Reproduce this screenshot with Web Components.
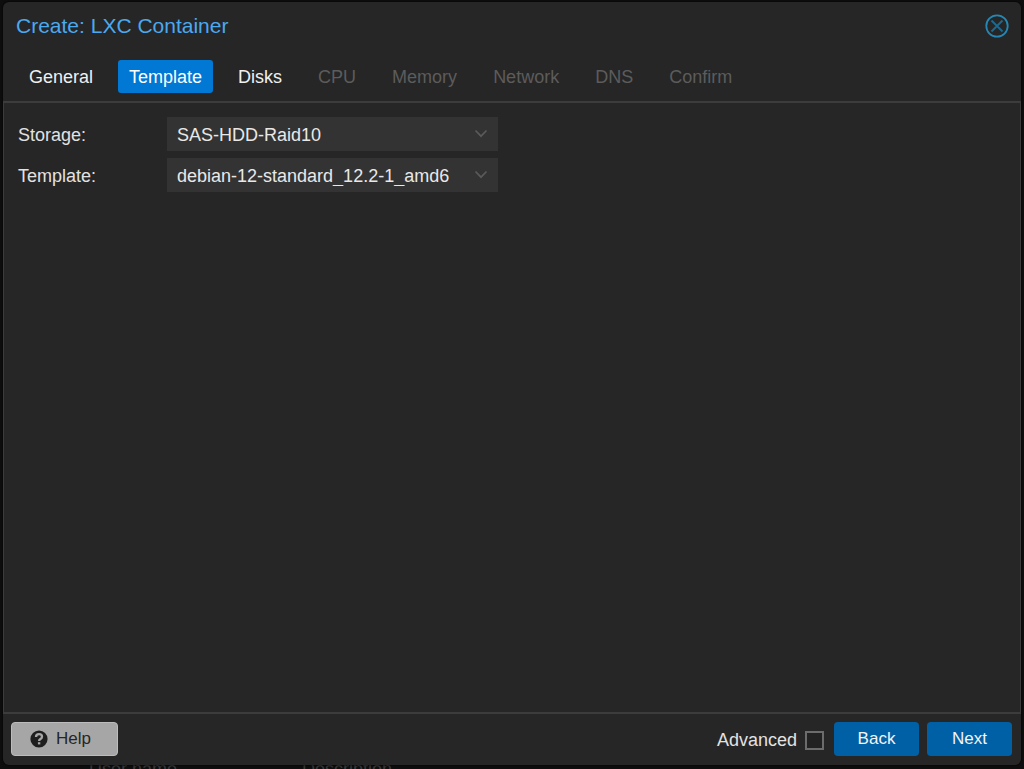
<!DOCTYPE html>
<html lang="en">
<head>
<meta charset="utf-8">
<title>Create: LXC Container</title>
<style>
  html, body { height: 100%; }
  body { margin: 0; background: #0e0e0e; overflow: hidden; font-family: "Liberation Sans", Arial, sans-serif; font-size: 18px; line-height: 20px; color: #e2e2e2; }
</style>
</head>
<body>
<wizard-app></wizard-app>
<script>
class Base extends HTMLElement {
  connectedCallback() {
    if (this.shadowRoot) return;
    this.attachShadow({ mode: 'open' }).innerHTML = '<style>*{box-sizing:border-box}</style>' + this.view();
  }
}

customElements.define('wizard-tab', class extends Base {
  view() {
    return `<style>
      :host { display: block; }
      button { display: block; height: 33px; padding: 0 11px; border: 0; border-radius: 3px; background: none; font: inherit; color: #f0f0f0; }
      button:disabled { color: #5c5c5c; }
      :host([active]) button { background: #0078d4; color: #fff; }
    </style><button role="tab" aria-selected="${this.hasAttribute('active')}" ${this.hasAttribute('disabled') ? 'disabled' : ''}><slot></slot></button>`;
  }
});

customElements.define('wizard-select', class extends Base {
  view() {
    return `<style>
      :host { display: grid; grid-template-columns: 149px 331px; align-items: center; }
      label { padding-top: 2px; }
      .box { display: grid; grid-template-columns: 1fr 34px; align-items: center; height: 34px; background: #333; }
      select { grid-area: 1 / 1 / 2 / 3; width: 100%; height: 34px; padding: 2px 34px 0 10px; border: 0; border-radius: 0; appearance: none; background: none; font: inherit; color: #e8e8e8; }
      svg { grid-area: 1 / 2; width: 14px; height: 10px; justify-self: center; pointer-events: none; }
    </style>
    <label for="s">${this.getAttribute('label')}:</label>
    <div class="box"><select id="s"><option>${this.getAttribute('value')}</option></select>
    <svg viewBox="0 0 14 10"><path d="M1.5 1.5 7 7.2l5.500-5.700" fill="none" stroke="#5a5a5a" stroke-width="1.700"/></svg></div>`;
  }
});

customElements.define('wizard-button', class extends Base {
  view() {
    return `<style>
      :host { display: block; font-size: 17px; }
      button { display: flex; align-items: center; justify-content: center; gap: 8px; min-width: 85px; height: 34px; padding: 0 18px; border: 0; border-radius: 4px; background: #0060a6; color: #f4f4f4; font: inherit; }
      :host([plain]) button { justify-content: flex-start; min-width: 107px; background: #a6a6a6; border: 1px solid #bcbcbc; color: #262626; }
    </style><button><slot name="icon"></slot><slot></slot></button>`;
  }
});

customElements.define('wizard-window', class extends Base {
  view() {
    return `<style>
      :host { display: flex; flex-direction: column; background: #262626; border-radius: 6px; box-shadow: 0 0 3px #000; }
      header { display: flex; align-items: center; justify-content: space-between; height: 48px; padding: 0 12px 0 13px; }
      h1 { margin: 0; font-size: 21px; line-height: 24px; font-weight: 400; color: #4ba9ef; }
      .close { display: block; width: 24px; height: 24px; padding: 0; border: 0; background: none; }
      .close svg { display: block; }
      nav { display: flex; gap: 14px; padding: 10px 15px 8px; }
      main { flex: 1; display: flex; flex-direction: column; gap: 7px; padding: 14px; border: solid #3c3c3c; border-width: 2px 1px; }
      footer { display: flex; align-items: center; padding: 8px 9px 9px 8px; gap: 8px; }
      .adv { display: flex; align-items: center; gap: 8px; margin-left: auto; padding-top: 2px; }
      input { appearance: none; width: 19px; height: 19px; margin: 0 2px 0 0; border: 2px solid #6c6c6c; background: #222; }
    </style>
    <header><h1>Create: LXC Container</h1>
      <button class="close" aria-label="Close"><svg width="24" height="24" viewBox="0 0 24 24" fill="none"><circle cx="12" cy="12" r="10.700" stroke="#2588b4" stroke-width="1.800"/><path d="M6.500 6.500l11 11m0-11l-11 11" stroke="#1c6a90" stroke-width="1.900"/></svg></button></header>
    <nav role="tablist"><slot name="tab"></slot></nav>
    <main><slot></slot></main>
    <footer><slot name="help"></slot>
      <div class="adv"><label for="adv">Advanced</label><input id="adv" type="checkbox"></div>
      <slot name="action"></slot></footer>`;
  }
});

customElements.define('wizard-app', class extends Base {
  view() {
    return `<style>
      :host { display: grid; height: 100%; padding: 2px 3px 4px; box-sizing: border-box; position: relative; }
      .behind { position: absolute; left: 89px; bottom: -10px; display: flex; gap: 125px; color: #3a3a3a; }
      wizard-window { position: relative; }
    </style>
    <div class="behind" aria-hidden="true"><span>User name</span><span>Description</span></div>
    <wizard-window>
      <wizard-tab slot="tab">General</wizard-tab>
      <wizard-tab slot="tab" active>Template</wizard-tab>
      <wizard-tab slot="tab">Disks</wizard-tab>
      <wizard-tab slot="tab" disabled>CPU</wizard-tab>
      <wizard-tab slot="tab" disabled>Memory</wizard-tab>
      <wizard-tab slot="tab" disabled>Network</wizard-tab>
      <wizard-tab slot="tab" disabled>DNS</wizard-tab>
      <wizard-tab slot="tab" disabled>Confirm</wizard-tab>
      <wizard-select label="Storage" value="SAS-HDD-Raid10"></wizard-select>
      <wizard-select label="Template" value="debian-12-standard_12.2-1_amd6"></wizard-select>
      <wizard-button slot="help" plain><svg slot="icon" width="18" height="18" viewBox="0 0 18 18"><circle cx="9" cy="9" r="8.600" fill="#1e1e1e"/><path d="M6 7Q6 4.200 9 4.200T12 6.800Q12 8.300 10.300 9.100Q9.100 9.700 9.100 11" fill="none" stroke="#a6a6a6" stroke-width="2.300"/><path d="M7.900 12.200h2.400v2.200H7.900z" fill="#a6a6a6"/></svg>Help</wizard-button>
      <wizard-button slot="action">Back</wizard-button>
      <wizard-button slot="action">Next</wizard-button>
    </wizard-window>`;
  }
});
</script>
</body>
</html>
